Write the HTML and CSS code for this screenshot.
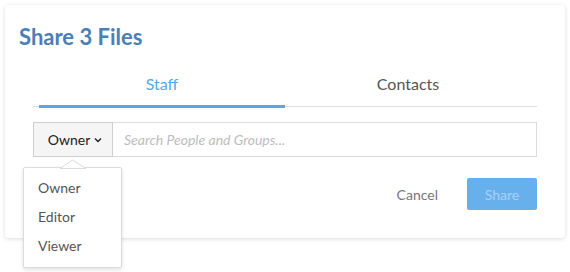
FILE: index.html
```html
<!DOCTYPE html>
<html lang="en">
<head>
  <meta charset="UTF-8">
  <title>Share 3 Files</title>
  <link rel="stylesheet" href="styles.css">
</head>
<body>
  <div class="card">
    <h1 class="title">Share 3 Files</h1>

    <div class="tabs">
      <div class="tab active">Staff</div>
      <div class="tab">Contacts</div>
    </div>

    <div class="search-row">
      <div class="role">
        <button class="role-btn">Owner
          <svg class="chevron" width="8" height="6" viewBox="0 0 8 6"><polyline points="1,1.5 4,4.5 7,1.5" fill="none" stroke="#222" stroke-width="1.4"/></svg>
        </button>
        <div class="menu">
          <svg class="menu-arrow" width="28" height="10" viewBox="0 0 28 10"><polygon points="0,9.5 12.5,1 26,9.5" fill="#fff" stroke="#dcdcdc" stroke-width="1"/></svg>
          <div class="menu-item">Owner</div>
          <div class="menu-item">Editor</div>
          <div class="menu-item">Viewer</div>
        </div>
      </div>
      <input class="search" type="text" placeholder="Search People and Groups...">
    </div>

    <div class="actions">
      <button class="cancel">Cancel</button>
      <button class="share" disabled>Share</button>
    </div>
  </div>
</body>
</html>
```

FILE: styles.css
```css
html, body {
  height: 272px;
}
body {
  margin: 0;
  font-family: Lato, 'Open Sans', sans-serif;
  background: #fff;
  color: #333;
  overflow: hidden;
}
.card {
  margin: 5px;
  width: 560px;
  height: 233px;
  box-sizing: border-box;
  padding: 19px 28px 0;
  background: #fff;
  border-radius: 4px;
  box-shadow: 0 1px 4px rgba(0,0,0,0.14);
}
.title {
  margin: 0 0 0 -14px;
  font-size: 22px;
  line-height: 26px;
  font-weight: 700;
  color: #4a7fb6;
}
.tabs {
  display: flex;
  margin-top: 24px;
  padding: 0 6px;
  border-bottom: 1px solid #dedede;
}
.tab {
  flex: 1;
  text-align: center;
  font-size: 16px;
  line-height: 20px;
  padding-bottom: 11px;
  border-bottom: 3px solid transparent;
  margin-bottom: -2px;
  color: #555;
}
.tab.active {
  color: #5ba6e8;
  border-bottom-color: #5ba6e8;
}
.search-row {
  display: flex;
  margin-top: 15px;
  height: 35px;
}
.role {
  position: relative;
}
.role-btn {
  height: 35px;
  width: 80px;
  box-sizing: border-box;
  border: 1px solid #cfcfcf;
  background: #f5f5f5;
  font-family: inherit;
  font-size: 14px;
  color: #222;
  padding: 0 0 0 4px;
  display: flex;
  align-items: center;
  justify-content: center;
  gap: 4px;
}
.chevron {
  margin-top: 1px;
}
.menu {
  position: absolute;
  top: 45px;
  left: -10px;
  width: 99px;
  box-sizing: border-box;
  padding: 5px 0 7px;
  background: #fff;
  border: 1px solid #dcdcdc;
  border-radius: 2px;
  box-shadow: 0 2px 4px rgba(0,0,0,0.12);
  z-index: 2;
}
.menu-arrow {
  position: absolute;
  top: -9px;
  left: 36px;
}
.menu-item {
  padding-left: 14px;
  font-size: 14px;
  line-height: 29px;
  color: #555;
}
.search {
  flex: 1;
  height: 35px;
  box-sizing: border-box;
  border: 1px solid #dcdcdc;
  border-left: none;
  padding: 0 11px;
  font-family: inherit;
  font-size: 14px;
  outline: none;
}
.search::placeholder {
  color: #bdbdbd;
  font-style: italic;
}
.actions {
  display: flex;
  justify-content: flex-end;
  align-items: center;
  gap: 13px;
  margin-top: 21px;
}
.cancel {
  border: none;
  background: none;
  font-family: inherit;
  font-size: 14px;
  color: #777;
  padding: 0 16px;
  height: 32px;
}
.share {
  width: 70px;
  height: 32px;
  border: none;
  border-radius: 2px;
  background: #68b0ec;
  color: #a9d0f2;
  font-family: inherit;
  font-size: 14px;
}
```
